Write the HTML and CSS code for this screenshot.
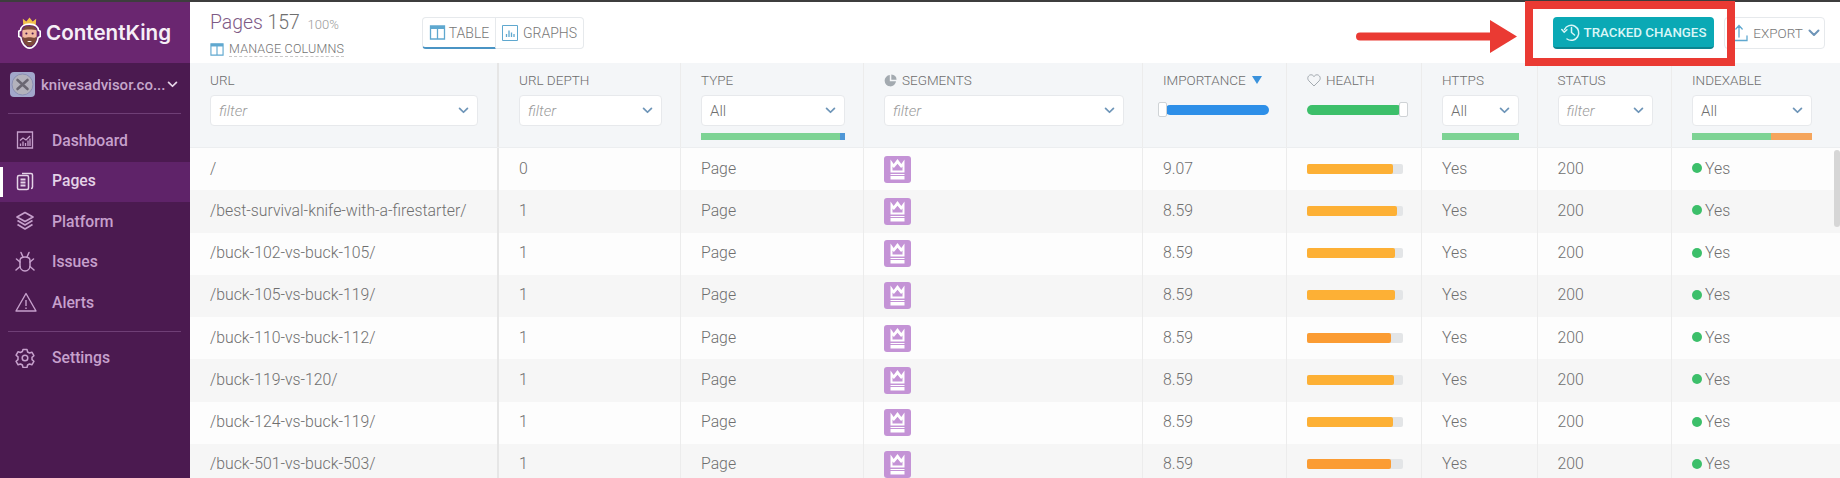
FILE: index.html
```html
<!DOCTYPE html>
<html lang="en">
<head>
<meta charset="utf-8">
<title>ContentKing - Pages</title>
<link rel="stylesheet" href="styles.css">
</head>
<body>
<svg class="defs" width="0" height="0" aria-hidden="true">
  <defs>
    <symbol id="chev" viewBox="0 0 12 8"><path d="M1.500 1.500 6 6l4.500-4.500" fill="none" stroke="currentColor" stroke-width="2" stroke-linecap="round" stroke-linejoin="round"/></symbol>
    <symbol id="crown" viewBox="0 0 27 27"><path d="M6.500 3.500 9.700 8 13.500 3 17.300 8 20.500 3.500V16.500H6.500Z" fill="#fff"/><path d="M8.500 10.500 9.900 12 13.500 7.800 17.100 12 18.500 10.500V14.500H8.500Z" fill="#c493d6"/><path d="M6.500 18h14v1h-14zM6.500 20h14v3.500h-14z" fill="#fff"/></symbol>
    <symbol id="cols" viewBox="0 0 16 15"><path d="M1 1h14v13H1zM8 3v11" fill="none" stroke="currentColor" stroke-width="1.300"/><path d="M1 1h14v3H1z" fill="currentColor"/></symbol>
  </defs>
</svg>
<div class="app">
  <aside class="sidebar">
    <div class="brand">
      <svg class="logo" width="25" height="36" viewBox="0 0 28 40">
        <path d="M7 11 6.500 4l4 3L14 2.500 17.500 7l4-3L21 11Z" fill="#f3c14b"/>
        <path d="M14 10c7 0 10 3.500 10 7l2 1v6l-2.200 1c-.8 6-4.800 12-9.800 12S5 31 4.200 25L2 24v-6l2-1c0-3.500 3-7 10-7Z" fill="#6a2670" stroke="#fff" stroke-width="1.800"/>
        <path d="M6 18c0-2.500 3-4.500 8-4.500s8 2 8 4.500v6c0 2-2 3-8 3s-8-1-8-3Z" fill="#f2b8a0"/>
        <path d="M9.500 12.500h9L22 17c-3-1.200-13-1.200-16 0Z" fill="#7b4a3a"/>
        <path d="M6 24c2 2 3 1.500 5 1s4-.5 6 0 3 1 5-1c0 6-4 11-8 11s-8-5-8-11Z" fill="#7b4a3a"/>
        <path d="M11.500 29h5c-.5 1.500-4.500 1.500-5 0Z" fill="#fff"/>
        <circle cx="10.500" cy="20.500" r="1.200" fill="#4a1a50"/><circle cx="17.500" cy="20.500" r="1.200" fill="#4a1a50"/>
      </svg>
      <span class="brand-name">ContentKing</span>
    </div>
    <div class="project">
      <svg class="avatar" width="25" height="25" viewBox="0 0 25 25">
        <rect width="25" height="25" rx="4" fill="#a2a7cb"/>
        <circle cx="12.500" cy="12.500" r="10.500" fill="#b3b2bc" stroke="#8b90b2"/>
        <path d="M7.500 8l10 9M17.500 8l-10 9" stroke="#6a6772" stroke-width="2.600" stroke-linecap="round"/>
      </svg>
      <span class="project-name">knivesadvisor.co...</span>
      <svg class="project-chev" width="11" height="7"><use href="#chev"/></svg>
    </div>
    <div class="divider"></div>
    <nav class="nav">
      <a class="nav-item">
        <svg class="nav-icon" width="20" height="20" viewBox="0 0 20 20" fill="none" stroke="currentColor" stroke-width="1.300"><path d="M2.500 2h15v16h-15z"/><path d="M5 10.500 8 8l3 2 4-4M5.500 16v-2.500M8 16v-4.500M10.500 16v-3M13 16v-5.500M15 16V8.500"/></svg>
        <span>Dashboard</span>
      </a>
      <a class="nav-item is-active">
        <svg class="nav-icon" width="20" height="20" viewBox="0 0 20 20" fill="none" stroke="currentColor" stroke-width="1.500"><path d="M7 2.500h9a1.500 1.500 0 0 1 1.500 1.500v12a1.500 1.500 0 0 1-1.500 1.500"/><rect x="2.500" y="4.500" width="11" height="14" rx="1.500"/><path d="M5.500 8.500h5M5.500 11.500h5M5.500 14.500h5" stroke-width="1.800"/></svg>
        <span>Pages</span>
      </a>
      <a class="nav-item">
        <svg class="nav-icon" width="20" height="20" viewBox="0 0 20 20" fill="none" stroke="currentColor" stroke-width="1.700" stroke-linejoin="round"><path d="M10 1.500 18 6l-8 4.500L2 6Z"/><path d="M2.500 9.500 10 14l7.500-4.500M2.500 13.500 10 18l7.500-4.500"/></svg>
        <span>Platform</span>
      </a>
      <a class="nav-item">
        <svg class="nav-icon" width="20" height="22" viewBox="0 0 20 22" fill="none" stroke="currentColor" stroke-width="1.500" stroke-linecap="round"><path d="M5 9.500c0-2 2-3.500 5-3.500s5 1.500 5 3.500v5c0 3-2 5.500-5 5.500s-5-2.500-5-5.500Z"/><path d="M6 1.500 8 6M14 1.500 12 6M1.500 8l3.500 3M18.500 8 15 11M1 19l4-3.500M19 19l-4-3.500"/></svg>
        <span>Issues</span>
      </a>
      <a class="nav-item">
        <svg class="nav-icon" width="22" height="20" viewBox="0 0 22 20" fill="none" stroke="currentColor" stroke-width="1.400" stroke-linejoin="round"><path d="M11 1.500 21 19H1Z"/><path d="M11 8v6M11 15.500v1.500"/></svg>
        <span>Alerts</span>
      </a>
    </nav>
    <div class="divider divider-lower"></div>
    <a class="nav-item">
      <svg class="nav-icon" width="20" height="20" viewBox="0 0 20 20" fill="none" stroke="currentColor" stroke-width="1.500" stroke-linejoin="round"><path d="M8 1.500h4l.6 2.500 1.900 1 2.400-.8 2 3.500-1.900 1.700v2.200l1.900 1.700-2 3.500-2.400-.8-1.900 1-.6 2.500H8l-.6-2.500-1.900-1-2.400.8-2-3.500 1.900-1.700V8.900L1.100 7.200l2-3.500 2.400.8 1.900-1Z"/><circle cx="10" cy="10" r="2.800"/></svg>
      <span>Settings</span>
    </a>
  </aside>

  <main class="content">
    <header class="topbar">
      <div class="title-block">
        <div class="title"><span class="title-name">Pages</span> <span class="title-count">157</span> <small class="title-pct">100%</small></div>
        <a class="manage"><svg width="14" height="13"><use href="#cols"/></svg><span class="manage-label">MANAGE COLUMNS</span></a>
      </div>
      <div class="toggle">
        <button class="toggle-btn is-on"><svg width="17" height="15"><use href="#cols"/></svg>TABLE</button>
        <button class="toggle-btn"><svg width="16" height="16" viewBox="0 0 16 16" fill="none" stroke="currentColor"><path d="M.5.500h15v15H.500z"/><path d="M4.500 12V9M7 12V5.500M9.500 12V7.500M12 12V9" stroke-width="1.300"/></svg>GRAPHS</button>
      </div>
      <div class="actions">
        <button class="tracked">
          <svg width="20" height="20" viewBox="0 0 20 20" fill="none" stroke="currentColor" stroke-width="1.500" stroke-linecap="round"><path d="M3.500 7.500A7.500 7.500 0 1 1 6 17"/><path d="M.8 7.500 3.200 10.200 5.900 7.800M10.500 5.500V10.500l3 2.500"/></svg>
          TRACKED CHANGES
        </button>
        <button class="export">
          <svg width="16" height="18" viewBox="0 0 16 18" fill="none" stroke="#5fa8cf" stroke-width="1.300" stroke-linecap="round"><path d="M7 13V2M3.800 5 7 1.500 10.200 5M1 12v4.500h14V12"/></svg>
          EXPORT
          <svg class="chev" width="12" height="8"><use href="#chev"/></svg>
        </button>
      </div>
    </header>

    <div class="table">
      <div class="row head">
        <div class="hcell sticky">
          <div class="hlabel">URL</div>
          <div class="select filter"><span>filter</span><svg class="chev" width="11" height="7"><use href="#chev"/></svg></div>
        </div>
        <div class="hcell">
          <div class="hlabel">URL DEPTH</div>
          <div class="select filter"><span>filter</span><svg class="chev" width="11" height="7"><use href="#chev"/></svg></div>
        </div>
        <div class="hcell">
          <div class="hlabel">TYPE</div>
          <div class="select"><span>All</span><svg class="chev" width="11" height="7"><use href="#chev"/></svg></div>
          <div class="dist"><i class="d-green" style="width:96.500%"></i><i class="d-blue" style="width:3.500%"></i></div>
        </div>
        <div class="hcell">
          <div class="hlabel"><svg width="13" height="13" viewBox="0 0 13 13"><path d="M5.800 1A5.700 5.700 0 1 0 12 7.200H5.800Z" fill="#a3aab0"/><path d="M7.300 0.500V5.800H12.600A5.600 5.600 0 0 0 7.300 0.500Z" fill="#a3aab0"/></svg>SEGMENTS</div>
          <div class="select filter"><span>filter</span><svg class="chev" width="11" height="7"><use href="#chev"/></svg></div>
        </div>
        <div class="hcell">
          <div class="hlabel">IMPORTANCE <svg class="sort" width="10" height="8" viewBox="0 0 10 8"><path d="M0 0h10L5 8Z" fill="#3a92dc"/></svg></div>
          <div class="slider slider-imp"><i class="slider-fill"></i><b class="handle"></b></div>
        </div>
        <div class="hcell">
          <div class="hlabel"><svg width="14" height="13" viewBox="0 0 14 13" fill="none" stroke="#a3aab0"><path d="M7 12 1.800 6.800C-.5 4.200 1.500.8 4 .8c1.400 0 2.400.7 3 1.800C7.600 1.500 8.600.8 10 .8c2.500 0 4.500 3.400 2.200 6Z"/></svg>HEALTH</div>
          <div class="slider slider-health"><i class="slider-fill"></i><b class="handle"></b></div>
        </div>
        <div class="hcell">
          <div class="hlabel">HTTPS</div>
          <div class="select"><span>All</span><svg class="chev" width="11" height="7"><use href="#chev"/></svg></div>
          <div class="dist"><i class="d-green" style="width:100%"></i></div>
        </div>
        <div class="hcell">
          <div class="hlabel">STATUS</div>
          <div class="select filter"><span>filter</span><svg class="chev" width="11" height="7"><use href="#chev"/></svg></div>
        </div>
        <div class="hcell">
          <div class="hlabel">INDEXABLE</div>
          <div class="select"><span>All</span><svg class="chev" width="11" height="7"><use href="#chev"/></svg></div>
          <div class="dist"><i class="d-green" style="width:66%"></i><i class="d-orange" style="width:34%"></i></div>
        </div>
      </div>

      <div class="row">
        <div class="cell sticky">/</div><div class="cell">0</div><div class="cell">Page</div>
        <div class="cell"><svg class="seg" width="27" height="27"><use href="#crown"/></svg></div>
        <div class="cell">9.07</div>
        <div class="cell"><div class="health"><i class="hb" style="width:90%"></i></div></div>
        <div class="cell">Yes</div><div class="cell">200</div><div class="cell"><i class="dot"></i>Yes</div>
      </div>
      <div class="row">
        <div class="cell sticky">/best-survival-knife-with-a-firestarter/</div><div class="cell">1</div><div class="cell">Page</div>
        <div class="cell"><svg class="seg" width="27" height="27"><use href="#crown"/></svg></div>
        <div class="cell">8.59</div>
        <div class="cell"><div class="health"><i class="hb" style="width:94%"></i></div></div>
        <div class="cell">Yes</div><div class="cell">200</div><div class="cell"><i class="dot"></i>Yes</div>
      </div>
      <div class="row">
        <div class="cell sticky">/buck-102-vs-buck-105/</div><div class="cell">1</div><div class="cell">Page</div>
        <div class="cell"><svg class="seg" width="27" height="27"><use href="#crown"/></svg></div>
        <div class="cell">8.59</div>
        <div class="cell"><div class="health"><i class="hb" style="width:92%"></i></div></div>
        <div class="cell">Yes</div><div class="cell">200</div><div class="cell"><i class="dot"></i>Yes</div>
      </div>
      <div class="row">
        <div class="cell sticky">/buck-105-vs-buck-119/</div><div class="cell">1</div><div class="cell">Page</div>
        <div class="cell"><svg class="seg" width="27" height="27"><use href="#crown"/></svg></div>
        <div class="cell">8.59</div>
        <div class="cell"><div class="health"><i class="hb" style="width:92%"></i></div></div>
        <div class="cell">Yes</div><div class="cell">200</div><div class="cell"><i class="dot"></i>Yes</div>
      </div>
      <div class="row">
        <div class="cell sticky">/buck-110-vs-buck-112/</div><div class="cell">1</div><div class="cell">Page</div>
        <div class="cell"><svg class="seg" width="27" height="27"><use href="#crown"/></svg></div>
        <div class="cell">8.59</div>
        <div class="cell"><div class="health"><i class="hb hb-low" style="width:88%"></i></div></div>
        <div class="cell">Yes</div><div class="cell">200</div><div class="cell"><i class="dot"></i>Yes</div>
      </div>
      <div class="row">
        <div class="cell sticky">/buck-119-vs-120/</div><div class="cell">1</div><div class="cell">Page</div>
        <div class="cell"><svg class="seg" width="27" height="27"><use href="#crown"/></svg></div>
        <div class="cell">8.59</div>
        <div class="cell"><div class="health"><i class="hb" style="width:91%"></i></div></div>
        <div class="cell">Yes</div><div class="cell">200</div><div class="cell"><i class="dot"></i>Yes</div>
      </div>
      <div class="row">
        <div class="cell sticky">/buck-124-vs-buck-119/</div><div class="cell">1</div><div class="cell">Page</div>
        <div class="cell"><svg class="seg" width="27" height="27"><use href="#crown"/></svg></div>
        <div class="cell">8.59</div>
        <div class="cell"><div class="health"><i class="hb" style="width:90%"></i></div></div>
        <div class="cell">Yes</div><div class="cell">200</div><div class="cell"><i class="dot"></i>Yes</div>
      </div>
      <div class="row">
        <div class="cell sticky">/buck-501-vs-buck-503/</div><div class="cell">1</div><div class="cell">Page</div>
        <div class="cell"><svg class="seg" width="27" height="27"><use href="#crown"/></svg></div>
        <div class="cell">8.59</div>
        <div class="cell"><div class="health"><i class="hb hb-low" style="width:87%"></i></div></div>
        <div class="cell">Yes</div><div class="cell">200</div><div class="cell"><i class="dot"></i>Yes</div>
      </div>
      <div class="scrollbar"></div>
    </div>
  </main>
</div>

<div class="callout-box"></div>
<svg class="callout-arrow" width="162" height="34" viewBox="0 0 162 34"><path d="M4 12.500H134V0L161 16.500 134 33V20.500H4a4 4 0 0 1 0-8Z" fill="#ea3a33"/></svg>
</body>
</html>
```
FILE: styles.css
```css
* { box-sizing: border-box; }
html, body { margin: 0; height: 478px; overflow: hidden; background: #fff; }
body { font-family: Roboto, "Liberation Sans", sans-serif; color: #6f6f6f; position: relative; }
.defs { position: absolute; }
button { font: inherit; color: inherit; background: none; border: 0; padding: 0; }

.app { display: grid; grid-template-columns: 190px 1650px; height: 478px; border-top: 2px solid #3d3d3d; }

/* sidebar */
.sidebar { background: #4b1a50; color: #c6a0cc; height: 476px; }
.brand { height: 61px; background: #6a2670; display: flex; align-items: center; padding-left: 17px; gap: 4px; }
.logo { flex: none; }
.brand-name { font-family: Inter, Lato, sans-serif; font-weight: 600; font-size: 20.600px; color: #f6eef7; }
.project { display: flex; align-items: center; padding: 9px 0 16px 10px; height: 50px; }
.avatar { flex: none; }
.project-name { margin-left: 6px; font-size: 15px; font-weight: 500; color: #c6a7cb; white-space: nowrap; }
.project-chev { margin-left: 2px; color: #e6d6e8; flex: none; }
.divider { height: 1px; margin: 0 9px 0 8px; background: #6f3f76; }
.nav { margin: 7px 0; }
.divider-lower { margin-bottom: 7px; }
.nav-item { display: flex; align-items: center; height: 40.500px; padding: 0 0 2px 15px; font-size: 15.700px; font-weight: 500; color: #c6a0cc; position: relative; }
.nav-item span { position: absolute; left: 52px; }
.nav-item.is-active { background: #5f2369; color: #e4d2e7; }
.nav-item.is-active::before { content: ""; position: absolute; left: 0; top: 5px; width: 3px; height: 30px; background: #fff; }

/* top bar */
.content { min-width: 0; height: 476px; overflow: hidden; }
.topbar { height: 61px; padding: 9px 15px 0 20px; display: flex; align-items: flex-start; background: #fff; }
.title-block { width: 212px; flex: none; }
.title { font-weight: 300; font-size: 19.400px; line-height: 24px; color: #6f6f6f; white-space: nowrap; }
.title-name { color: #7e5a85; }
.title-pct { font-size: 13px; color: #9a9a9a; margin-left: 3px; }
.manage { display: flex; align-items: center; margin-top: 4px; color: #5fa8cf; gap: 5px; }
.manage-label { font-size: 12.500px; font-weight: 300; color: #737373; border-bottom: 1px dashed #c8c8c8; line-height: 15px; letter-spacing: .2px; }
.toggle { display: flex; margin-top: 6px; height: 32px; flex: none; }
.toggle-btn { display: flex; align-items: center; gap: 5px; width: 88px; justify-content: center; border: 1px solid #e6e9ec; border-left: 0; border-radius: 0 4px 4px 0; font-size: 14px; font-weight: 300; color: #777; }
.toggle-btn svg { color: #5fa8cf; }
.toggle-btn.is-on { width: 74px; gap: 3px; border: 1px solid #e6e9ec; border-bottom: 2px solid #4a94c4; border-radius: 4px 0 0 4px; }
.actions { margin-left: auto; margin-top: 6px; display: flex; gap: 10px; }
.tracked { width: 161px; height: 32px; border-radius: 4px; background: #0aa9b5; border-bottom: 2px solid #0a8590; color: #d9f6f7; font-size: 13.300px; font-weight: 500; display: flex; align-items: center; justify-content: center; gap: 3px; white-space: nowrap; }
.export { width: 101px; height: 32px; padding-left: 3px; border: 1px solid #e6e9ec; border-radius: 4px; display: flex; align-items: center; justify-content: center; gap: 5px; font-size: 13.500px; font-weight: 300; color: #777; }
.chev { color: #6e95b8; flex: none; }

/* table */
.table { position: relative; height: 415px; overflow: hidden; }
.row { display: grid; grid-template-columns: 309px 182px 183px 279px 144px 135px 115.500px 134.500px 158px 10px; height: 42.250px; font-size: 15.800px; font-weight: 300; }
.row:nth-child(odd) { background: #f6f6f6; }
.row:nth-child(even) { background: #fdfdfd; }
.row.head { height: 85px; background: #f4f6f8; border-bottom: 1px solid #eceef0; }
.cell, .hcell { padding: 0 18px 0 20px; border-right: 1px solid #ececec; min-width: 0; }
.cell { display: flex; align-items: center; padding-bottom: 2px; white-space: nowrap; }
.hcell { padding-top: 9px; }
.row .sticky { padding-right: 19px; border-right: 2px solid #e6e6e6; }
.row.head > .hcell:nth-child(9) { border-right: 0; }
.row > .cell:nth-child(9) { border-right: 0; }
.hlabel { height: 16px; line-height: 16px; font-size: 13.500px; font-weight: 300; color: #6d6d6d; display: flex; align-items: center; gap: 5px; white-space: nowrap; }
.sort { margin-left: 1px; }
.select { height: 31px; margin-top: 7px; background: #fff; border: 1px solid #e7e9ec; border-radius: 4px; display: flex; align-items: center; justify-content: space-between; padding: 0 8px 0 8px; font-size: 15px; color: #6f6f6f; }
.select.filter span { font-style: italic; color: #9b9b9b; }
.dist { display: flex; height: 7px; margin-top: 7px; }
.dist i { display: block; height: 100%; }
.d-green { background: #7dd394; }
.d-blue { background: #4f97d6; }
.d-orange { background: #f5a55c; }
.slider { position: relative; height: 10px; margin-top: 17px; border-radius: 5px; }
.slider-fill { display: block; height: 100%; border-radius: 5px; }
.slider-imp { width: 106px; }
.slider-imp .slider-fill { background: #2d8fe8; margin-left: 2px; }
.slider-imp .handle { left: -5px; }
.slider-health { width: 101px; }
.slider-health .slider-fill { background: #3cbf6a; width: 95px; }
.slider-health .handle { right: 0; }
.handle { position: absolute; top: -3px; width: 9px; height: 15px; background: #fff; border: 1px solid #cfd3d6; border-radius: 2px; }
.seg { background: #c493d6; border-radius: 3px; margin-top: 2px; }
.health { width: 96px; height: 10px; margin-top: 1px; background: #e3e5e7; border-radius: 2px; }
.hb { display: block; height: 100%; background: #fdb035; border-radius: 2px; }
.hb-low { background: #fb9c33; }
.dot { width: 10px; height: 10px; border-radius: 50%; background: #3cbf6a; margin-right: 3px; flex: none; }
.scrollbar { position: absolute; right: 0; top: 87px; width: 6px; height: 77px; background: #d6d6d6; border-radius: 3px; }

/* annotation */
.callout-box { position: absolute; left: 1525px; top: 1px; width: 210px; height: 65px; border: 8px solid #ea3a33; }
.callout-arrow { position: absolute; left: 1356px; top: 20px; }
```
